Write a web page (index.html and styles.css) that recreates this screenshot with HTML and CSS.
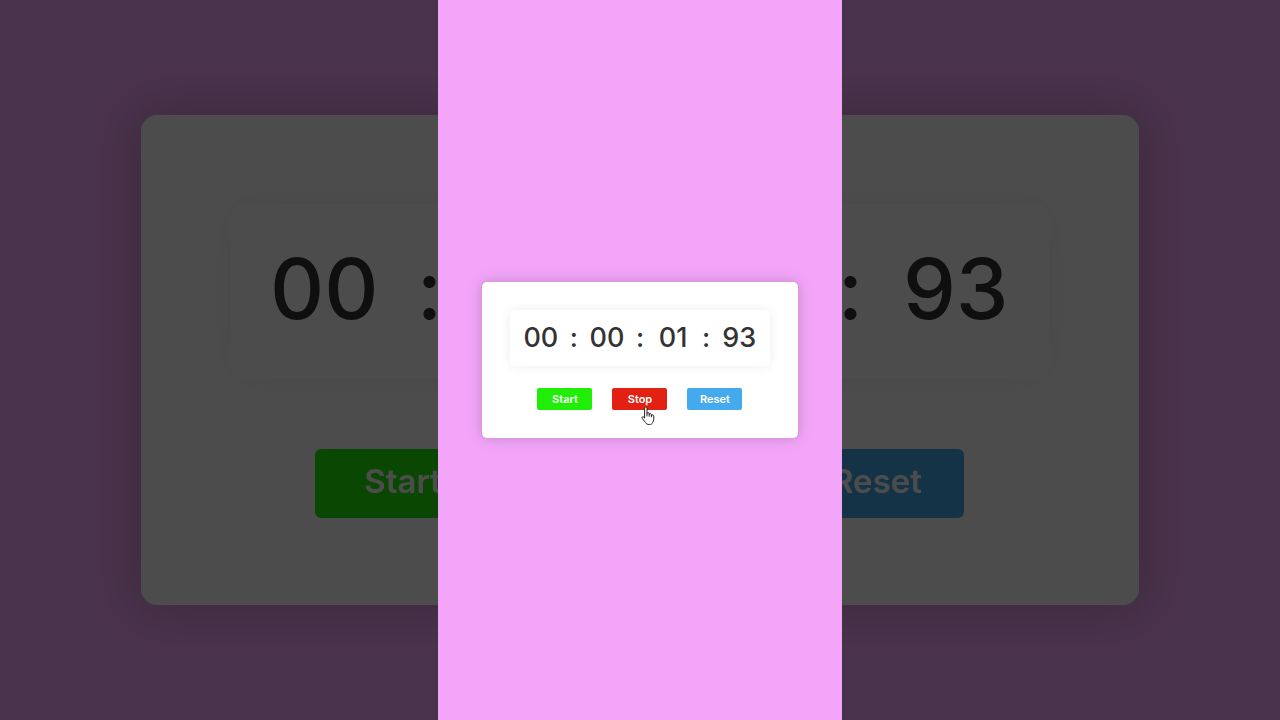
FILE: index.html
```html
<!DOCTYPE html>
<html lang="en">
<head>
<meta charset="utf-8">
<meta name="viewport" content="width=device-width, initial-scale=1">
<title>Stopwatch</title>
<link rel="stylesheet" href="styles.css">
</head>
<body class="page">
  <div class="backdrop" aria-hidden="true" inert>
    <div class="card card-large">
      <div class="display">
        <span>00</span><span>:</span><span class="covered">00</span><span class="covered">:</span><span class="covered">01</span><span>:</span><span>93</span>
      </div>
      <div class="controls">
        <button class="btn btn-start" type="button" tabindex="-1">Start</button>
        <button class="btn btn-stop covered" type="button" tabindex="-1">Stop</button>
        <button class="btn btn-reset" type="button" tabindex="-1">Reset</button>
      </div>
    </div>
  </div>
  <main class="stage">
    <section class="card card-small" aria-label="Stopwatch">
      <div class="display" role="timer">
        <span>00</span><span>:</span><span>00</span><span>:</span><span>01</span><span>:</span><span>93</span>
      </div>
      <div class="controls">
        <button class="btn btn-start" type="button">Start</button>
        <button class="btn btn-stop" type="button">Stop
          <svg class="pointer" viewBox="0 0 14 19" aria-hidden="true"><path d="M3.6 11.8V2.2C3.6.4 6 .4 6 2.2v5.2C6.3 6.3 8 6.4 8.2 7.6v.7c.4-1 2.1-.8 2.2.4v.7c.5-.9 2.3-.6 2.4.6v3.2c0 1.5-.9 2.3-1.2 3.4-.4 1.2-1.4 1.9-3.2 1.9-2 0-3.2-.6-4.1-2.2L1.1 12.3c-.8-1.4.9-2.5 2.5-.5M6 7.4V10M8.2 8.3V10.3M10.4 9.3V10.8" fill="#fff" stroke="#222" stroke-width="1" stroke-linejoin="round" stroke-linecap="round"/></svg>
        </button>
        <button class="btn btn-reset" type="button">Reset</button>
      </div>
    </section>
  </main>
</body>
</html>
```

FILE: styles.css
```css
* {
  box-sizing: border-box;
}

.page {
  margin: 0;
  min-height: 100vh;
  display: grid;
  overflow: hidden;
  font-family: Inter, "Liberation Sans", sans-serif;
}

/* The dimmed backdrop and the stage share one grid cell. */
.backdrop,
.stage {
  grid-area: 1 / 1;
  display: grid;
  place-items: center;
  background: #f3a6f9;
}

.backdrop {
  filter: brightness(0.3);
}

/* Backdrop parts that lie behind the stage keep their space only. */
.covered {
  visibility: hidden;
}

.stage {
  z-index: 1;
  height: 100vh;
  aspect-ratio: 101 / 180;
  justify-self: center;
}

.card {
  background: #fff;
}

.card-large {
  width: 78%;
  padding: 89px 89px 87px;
  border-radius: 16px;
  box-shadow: 0 0 48px rgba(0, 0, 0, 0.2);
}

.card-small {
  width: 78%;
  padding: 28px;
  border-radius: 5px;
  box-shadow: 0 0 15px rgba(0, 0, 0, 0.2);
}

.display {
  display: grid;
  grid-template-columns: 5fr 4fr 5fr 4fr 5fr 4fr 5fr;
  color: #333;
  font-weight: 450;
  text-align: center;
}

.card-large .display {
  padding: 33px 36px 38px;
  border-radius: 16px;
  box-shadow: 0 0 40px rgba(0, 0, 0, 0.06);
  font-size: 84px;
  line-height: 104px;
}

.card-small .display {
  padding: 12px;
  border-radius: 5px;
  box-shadow: 0 0 12px rgba(0, 0, 0, 0.08);
  font-size: 27px;
  line-height: 32px;
}

.controls {
  display: flex;
  justify-content: center;
}

.card-large .controls {
  gap: 62px;
  margin-top: 70px;
}

.card-small .controls {
  gap: 20px;
  margin-top: 22px;
}

.btn {
  position: relative;
  border: 0;
  color: #fff;
  font-family: inherit;
  font-weight: 600;
  cursor: pointer;
}

.card-large .btn {
  width: 175px;
  padding: 12px 0 17px;
  border-radius: 6px;
  font-size: 33px;
  line-height: 40px;
}

.card-small .btn {
  width: 55px;
  padding: 3px 0;
  border-radius: 2px;
  font-size: 11px;
  line-height: 16px;
}

.btn-start {
  background: #20ee08;
}

.btn-stop {
  background: #e22113;
}

.btn-reset {
  background: #45aaed;
}

.pointer {
  position: absolute;
  top: 18px;
  left: 29px;
  width: 14px;
  height: 19px;
}
```
